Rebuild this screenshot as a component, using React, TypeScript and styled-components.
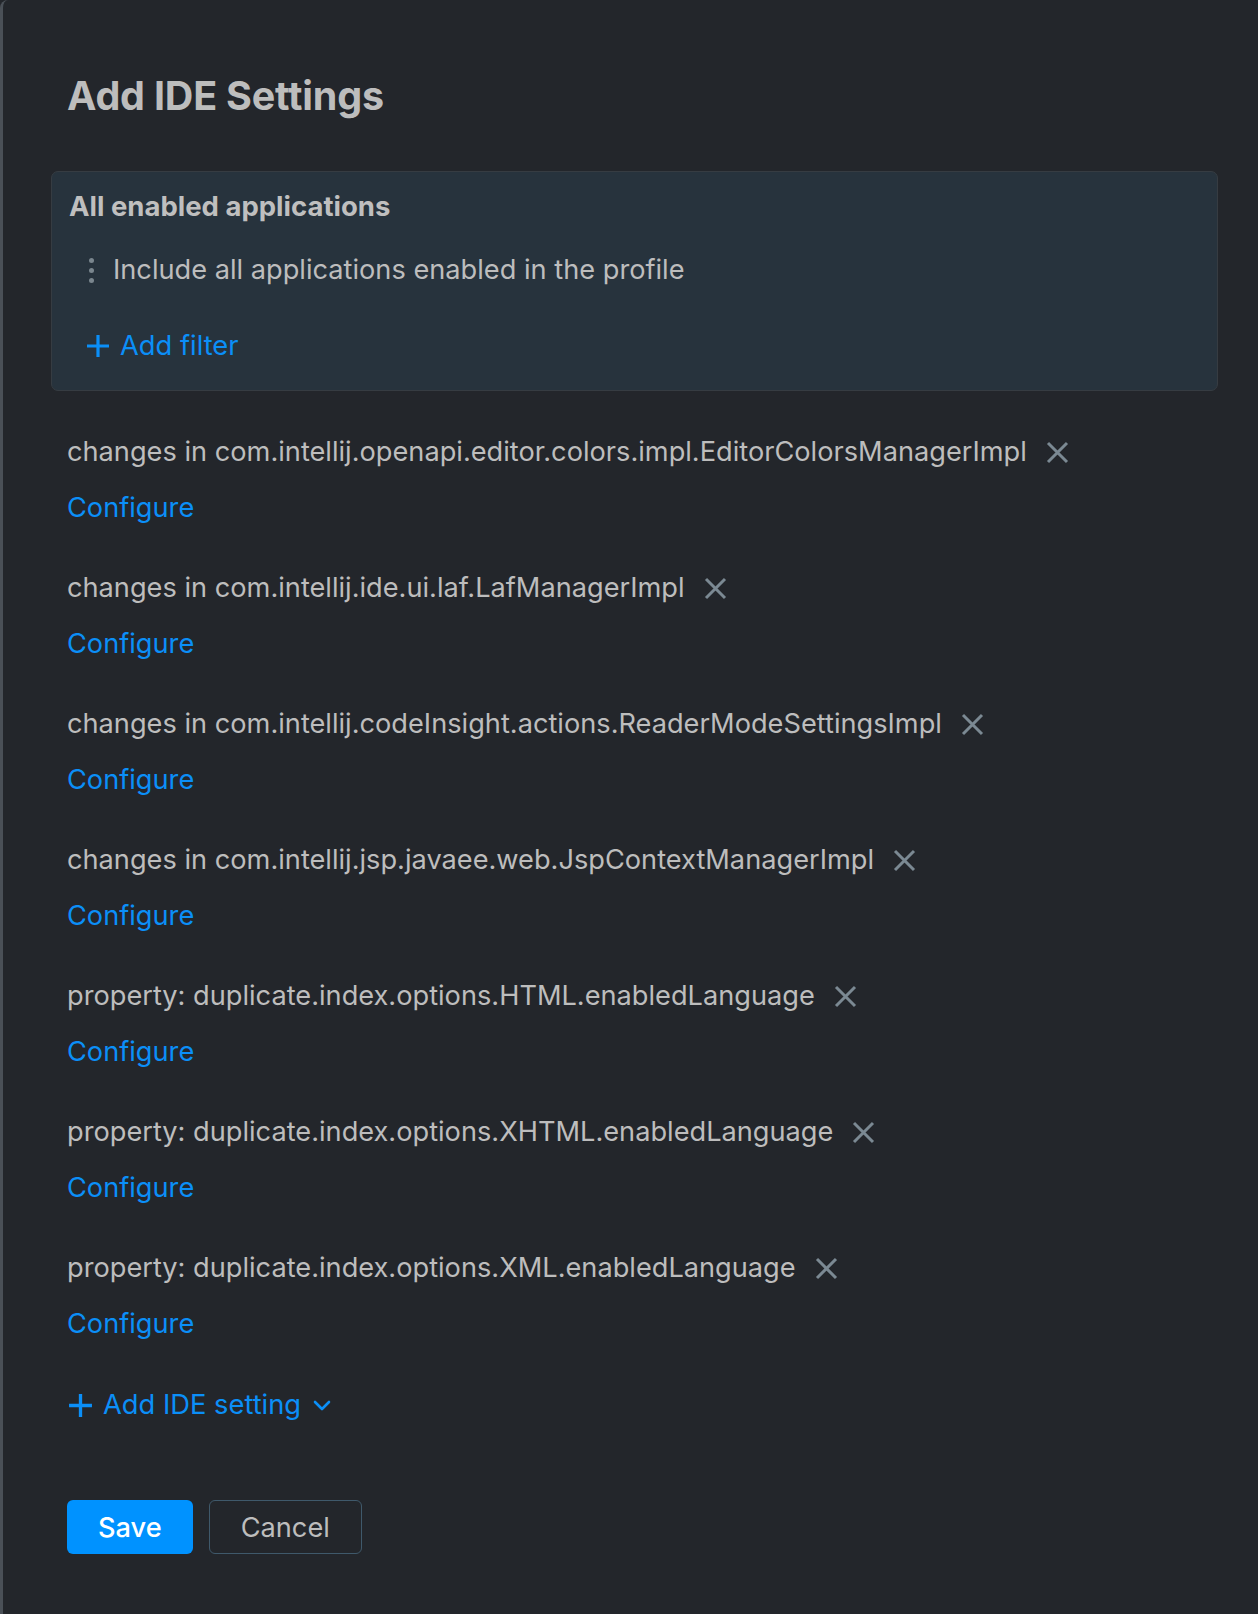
import React from "react";
import styled, { createGlobalStyle } from "styled-components";

const Global = createGlobalStyle`
  html, body { margin: 0; padding: 0; background: #23262b; }
  body { font-family: Inter, "Noto Sans", sans-serif; -webkit-font-smoothing: antialiased; }
`;

const Page = styled.div`
  box-sizing: border-box;
  min-height: 1614px;
  background: #23262b;
  border-left: 3px solid #4a5057;
  border-top-left-radius: 8px;
  padding: 72px 40px 62px 48px;
  display: flex;
  flex-direction: column;
  align-items: flex-start;
`;

const Title = styled.h1`
  margin: 0 0 0 16px;
  font-size: 39.5px;
  line-height: 48px;
  font-weight: 700;
  color: #bdbdbd;
  letter-spacing: -0.2px;
`;

const Card = styled.section`
  box-sizing: border-box;
  align-self: stretch;
  margin-top: 51px;
  background: #27333d;
  border: 1px solid #363c42;
  border-radius: 7px;
  padding: 17px 17px 27px 17px;
  display: flex;
  flex-direction: column;
  align-items: flex-start;
`;

const CardTitle = styled.div`
  font-size: 27.5px;
  line-height: 34px;
  font-weight: 700;
  color: #bfbfbf;
`;

const Condition = styled.div`
  margin-top: 30px;
  display: flex;
  align-items: center;
  gap: 19px;
  padding-left: 20px;
  font-size: 27.2px;
  line-height: 34px;
  color: #bdbdbd;
`;

const Dots = styled.span`
  display: flex;
  flex-direction: column;
  gap: 5px;
  span {
    width: 5px;
    height: 5px;
    border-radius: 50%;
    background: #7a868e;
  }
`;

const LinkButton = styled.button<{ $top: number; $indent?: number }>`
  margin-top: ${(p) => p.$top}px;
  margin-left: ${(p) => p.$indent ?? 0}px;
  padding: 0;
  border: 0;
  background: none;
  display: flex;
  align-items: center;
  gap: 10px;
  font-family: inherit;
  font-size: 27.3px;
  line-height: 34px;
  color: #0b8ff8;
  cursor: pointer;
`;

const List = styled.div`
  margin-top: 44px;
  margin-left: 16px;
  display: flex;
  flex-direction: column;
  align-items: flex-start;
  gap: 46px;
`;

const Item = styled.div`
  display: flex;
  flex-direction: column;
  align-items: flex-start;
  gap: 22px;
`;

const ItemLine = styled.div`
  display: flex;
  align-items: center;
  gap: 19px;
  font-size: 27.2px;
  line-height: 34px;
  color: #bdbdbd;
`;

const Configure = styled.a`
  font-size: 27.2px;
  line-height: 34px;
  color: #0b8ff8;
  text-decoration: none;
  cursor: pointer;
`;

const Buttons = styled.div`
  margin-top: 78px;
  margin-left: 16px;
  display: flex;
  gap: 16px;
`;

const Button = styled.button<{ $primary?: boolean }>`
  box-sizing: border-box;
  height: 54px;
  padding: 0 31px;
  border-radius: 6px;
  border: ${(p) => (p.$primary ? "none" : "1.5px solid #3f596b")};
  background: ${(p) => (p.$primary ? "#0092ff" : "transparent")};
  color: ${(p) => (p.$primary ? "#ffffff" : "#bdbdbd")};
  font-family: inherit;
  font-size: 27.2px;
  font-weight: ${(p) => (p.$primary ? 500 : 400)};
  cursor: pointer;
`;

const Plus = ({ size }: { size: number }) => (
  <svg width={size} height={size} viewBox="0 0 24 24" fill="none">
    <path d="M12 1v22M1 12h22" stroke="#0b8ff8" strokeWidth="3.2" />
  </svg>
);

const Close = () => (
  <svg width="23" height="23" viewBox="0 0 23 23" fill="none">
    <path d="M2 2l19 19M21 2L2 21" stroke="#7b8993" strokeWidth="3" />
  </svg>
);

const Chevron = () => (
  <svg width="18" height="11" viewBox="0 0 18 11" fill="none" style={{ marginLeft: 2 }}>
    <path d="M2 2l7 7 7-7" stroke="#0b8ff8" strokeWidth="2.6" strokeLinecap="round" strokeLinejoin="round" />
  </svg>
);

const settings = [
  "changes in com.intellij.openapi.editor.colors.impl.EditorColorsManagerImpl",
  "changes in com.intellij.ide.ui.laf.LafManagerImpl",
  "changes in com.intellij.codeInsight.actions.ReaderModeSettingsImpl",
  "changes in com.intellij.jsp.javaee.web.JspContextManagerImpl",
  "property: duplicate.index.options.HTML.enabledLanguage",
  "property: duplicate.index.options.XHTML.enabledLanguage",
  "property: duplicate.index.options.XML.enabledLanguage",
];

export default function App() {
  return (
    <>
      <Global />
      <Page>
        <Title>Add IDE Settings</Title>
        <Card>
          <CardTitle>All enabled applications</CardTitle>
          <Condition>
            <Dots>
              <span />
              <span />
              <span />
            </Dots>
            Include all applications enabled in the profile
          </Condition>
          <LinkButton $top={42} $indent={17}>
            <Plus size={24} />
            Add filter
          </LinkButton>
        </Card>
        <List>
          {settings.map((s) => (
            <Item key={s}>
              <ItemLine>
                {s}
                <Close />
              </ItemLine>
              <Configure>Configure</Configure>
            </Item>
          ))}
        </List>
        <LinkButton $top={47} $indent={17}>
          <Plus size={25} />
          Add IDE setting
          <Chevron />
        </LinkButton>
        <Buttons>
          <Button $primary>Save</Button>
          <Button>Cancel</Button>
        </Buttons>
      </Page>
    </>
  );
}
